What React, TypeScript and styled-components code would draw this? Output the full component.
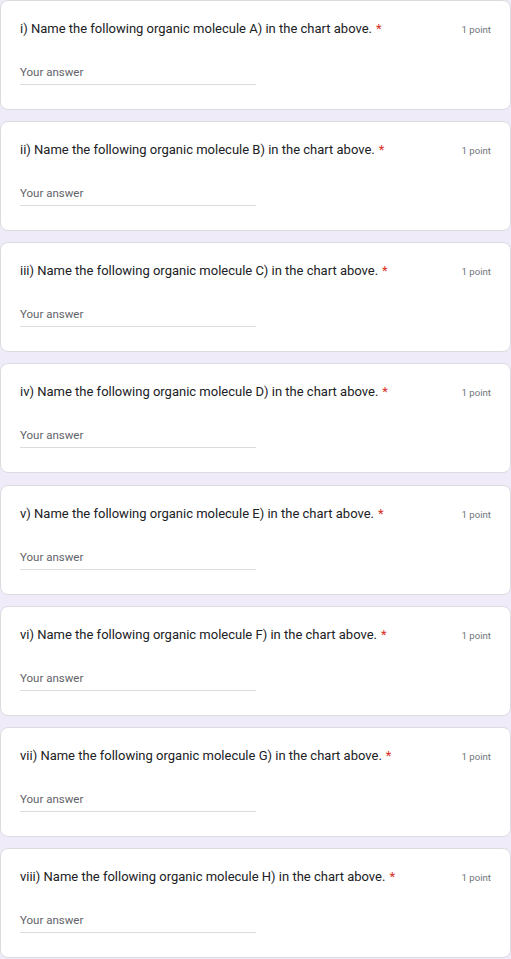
import React from "react";
import styled, { createGlobalStyle } from "styled-components";

const Global = createGlobalStyle`
  html, body { margin: 0; padding: 0; background: #f0ebf8; }
  body { font-family: Roboto, "Liberation Sans", Arial, sans-serif; }
`;

const List = styled.div`
  display: flex;
  flex-direction: column;
  gap: 11.14px;
  padding-bottom: 2px;
`;

const Card = styled.section`
  box-sizing: border-box;
  height: 110px;
  background: #fff;
  border: 1px solid #dadce0;
  border-radius: 8px;
  padding: 18px 19px 0 19px;
  display: flex;
  flex-direction: column;
`;

const Header = styled.div`
  display: flex;
  justify-content: space-between;
  align-items: baseline;
`;

const Title = styled.div`
  font-family: Roboto, "Liberation Sans", sans-serif;
  font-size: 13px;
  line-height: 20px;
  color: #202124;
`;

const Required = styled.span`
  color: #d93025;
  margin-left: 4px;
`;

const Points = styled.div`
  font-family: Roboto, "Liberation Sans", sans-serif;
  font-size: 9.6px;
  color: #70757a;
  white-space: nowrap;
`;

const Answer = styled.div`
  margin-top: 25px;
  width: 236px;
  height: 21px;
  box-sizing: border-box;
  border-bottom: 1px solid #dadce0;
  font-family: Roboto, "Liberation Sans", sans-serif;
  font-size: 11.5px;
  line-height: 16px;
  color: #5f6368;
`;

const questions = [
  ["i", "A"],
  ["ii", "B"],
  ["iii", "C"],
  ["iv", "D"],
  ["v", "E"],
  ["vi", "F"],
  ["vii", "G"],
  ["viii", "H"],
];

export default function App() {
  return (
    <>
      <Global />
      <List>
        {questions.map(([n, l]) => (
          <Card key={n}>
            <Header>
              <Title>
                {n}) Name the following organic molecule {l}) in the chart above.
                <Required>*</Required>
              </Title>
              <Points>1 point</Points>
            </Header>
            <Answer>Your answer</Answer>
          </Card>
        ))}
      </List>
    </>
  );
}
